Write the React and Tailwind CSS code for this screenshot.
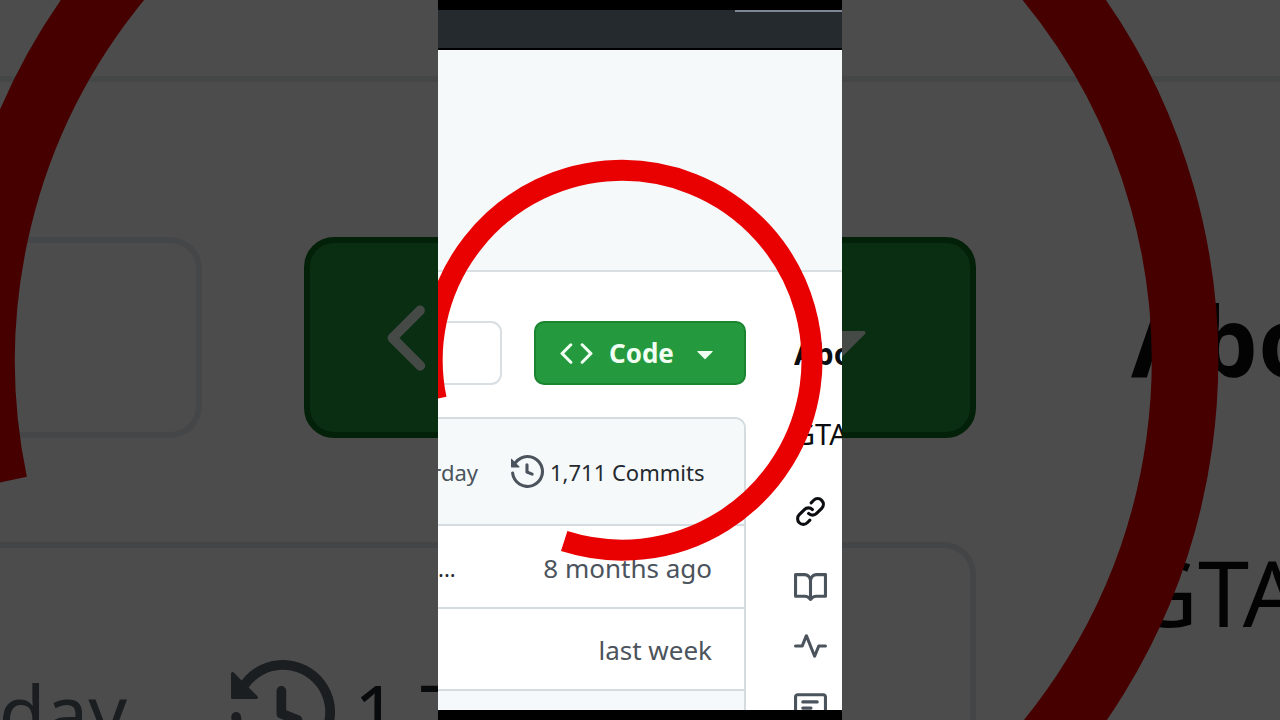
import React from "react";

const PATHS = {
  code: "m11.28 3.22 4.25 4.25a.75.75 0 0 1 0 1.06l-4.25 4.25a.749.749 0 0 1-1.275-.326.749.749 0 0 1 .215-.734L13.94 8l-3.72-3.72a.749.749 0 0 1 .326-1.275.749.749 0 0 1 .734.215Zm-6.56 0a.751.751 0 0 1 1.042.018.751.751 0 0 1 .018 1.042L2.06 8l3.72 3.72a.749.749 0 0 1-.326 1.275.749.749 0 0 1-.734-.215L.47 8.53a.75.75 0 0 1 0-1.06Z",
  caret: "m4.427 7.427 3.396 3.396a.25.25 0 0 0 .354 0l3.396-3.396A.25.25 0 0 0 11.396 7H4.604a.25.25 0 0 0-.177.427Z",
  history: "m.427 1.927 1.215 1.215a8.002 8.002 0 1 1-1.6 5.685.75.75 0 1 1 1.493-.154 6.5 6.5 0 1 0 1.18-4.458l1.358 1.358A.25.25 0 0 1 3.896 6H.25A.25.25 0 0 1 0 5.75V2.104a.25.25 0 0 1 .427-.177ZM7.75 4a.75.75 0 0 1 .75.75v2.992l2.028.812a.75.75 0 0 1-.557 1.392l-2.5-1A.751.751 0 0 1 7 8.25v-3.5A.75.75 0 0 1 7.75 4Z",
  link: "m7.775 3.275 1.25-1.25a3.5 3.5 0 1 1 4.95 4.95l-2.5 2.5a3.5 3.5 0 0 1-4.95 0 .751.751 0 0 1 .018-1.042.751.751 0 0 1 1.042-.018 1.998 1.998 0 0 0 2.83 0l2.5-2.5a2.002 2.002 0 0 0-2.83-2.83l-1.25 1.25a.751.751 0 0 1-1.042-.018.751.751 0 0 1-.018-1.042Zm-4.69 9.64a1.998 1.998 0 0 0 2.83 0l1.25-1.25a.751.751 0 0 1 1.042.018.751.751 0 0 1 .018 1.042l-1.25 1.25a3.5 3.5 0 1 1-4.95-4.95l2.5-2.5a3.5 3.5 0 0 1 4.95 0 .751.751 0 0 1-.018 1.042.751.751 0 0 1-1.042.018 1.998 1.998 0 0 0-2.83 0l-2.5 2.5a1.998 1.998 0 0 0 0 2.83Z",
  book: "M0 1.75A.75.75 0 0 1 .75 1h4.253c1.227 0 2.317.59 3 1.501A3.743 3.743 0 0 1 11.006 1h4.245a.75.75 0 0 1 .75.75v10.5a.75.75 0 0 1-.75.75h-4.507a2.25 2.25 0 0 0-1.591.659l-.622.621a.75.75 0 0 1-1.06 0l-.622-.621A2.25 2.25 0 0 0 5.258 13H.75a.75.75 0 0 1-.75-.75Zm7.251 10.324.004-5.073-.002-2.253A2.25 2.25 0 0 0 5.003 2.5H1.5v9h3.757a3.75 3.75 0 0 1 1.994.574ZM8.755 4.75l-.004 7.322a3.752 3.752 0 0 1 1.992-.572H14.5v-9h-3.495a2.25 2.25 0 0 0-2.25 2.25Z",
  pulse: "M6 2c.306 0 .582.187.696.471L10 10.731l1.304-3.26A.751.751 0 0 1 12 7h3.25a.75.75 0 0 1 0 1.5h-2.742l-1.812 4.528a.751.751 0 0 1-1.392 0L6 4.77 4.696 8.03A.75.75 0 0 1 4 8.5H.75a.75.75 0 0 1 0-1.5h2.742l1.812-4.529A.751.751 0 0 1 6 2Z",
  note: "M0 3.75C0 2.784.784 2 1.75 2h12.5c.966 0 1.75.784 1.75 1.75v8.5A1.75 1.75 0 0 1 14.25 14H1.75A1.75 1.75 0 0 1 0 12.25Zm1.75-.25a.25.25 0 0 0-.25.25v8.5c0 .138.112.25.25.25h12.5a.25.25 0 0 0 .25-.25v-8.5a.25.25 0 0 0-.25-.25ZM3.5 6.25a.75.75 0 0 1 .75-.75h7a.75.75 0 0 1 0 1.5h-7a.75.75 0 0 1-.75-.75Zm.75 2.25h4a.75.75 0 0 1 0 1.5h-4a.75.75 0 0 1 0-1.5Z",
};

function Icon({ name, className }) {
  return (
    <svg viewBox="0 0 16 16" fill="currentColor" aria-hidden="true" className={`shrink-0 ${className}`}>
      <path d={PATHS[name]} />
    </svg>
  );
}

// Open red ring drawn over the Code button.
function Ring() {
  return (
    <svg
      viewBox="438 0 404 720"
      preserveAspectRatio="xMidYMid slice"
      aria-hidden="true"
      className="pointer-events-none absolute inset-0 h-full w-full"
    >
      <path
        d="M564.2 541.1A189.9 189.9 0 1 0 436.2 399"
        fill="none"
        stroke="#e90000"
        strokeWidth="21"
      />
    </svg>
  );
}

// Enlarged, dimmed view of the same page behind the main panel.
function Backdrop() {
  return (
    <div aria-hidden="true" className="absolute inset-0 overflow-hidden opacity-30">
      <div className="flex h-full flex-col bg-[#fcfcfc]">
        <div className="h-[82px] shrink-0 border-b-[6px] border-[#e3e8e9] bg-[#fafbfb]" />
        <div className="flex min-h-0 flex-1 justify-between">
          <div className="flex w-[976px] shrink-0 flex-col pt-[155px]">
            <div className="flex h-[201px] shrink-0 justify-between">
              <div className="w-[202px] rounded-r-[32px] border-y-[6px] border-r-[6px] border-[#e3e7eb]" />
              <div className="flex w-[672px] items-center justify-between rounded-[30px] border-[6px] border-[#0d6b1b] bg-[#23973d] pr-[74px] pl-[76px] text-[#e4f5e7]">
                <Icon name="code" className="size-[104px]" />
                <Icon name="caret" className="size-[112px]" />
              </div>
            </div>
            <div className="mt-[104px] flex min-h-[340px] items-start rounded-tr-[32px] border-t-[6px] border-r-[6px] border-[#e0e5e9] bg-[#fafbfb] pt-[112px] text-[76px] leading-[104px] text-[#1f2328]">
              <span className="flex w-[127px] justify-end text-[#59636e]">yesterday</span>
              <Icon name="history" className="ml-[104px] size-[104px] text-[#59636e]" />
              <span className="ml-[19px]">1,711</span>
            </div>
          </div>
          <div className="w-[149px] shrink-0 pt-[204px] text-[#0b0d10]">
            <p className="text-[96px] leading-[108px] font-bold">About</p>
            <p className="mt-[144px] text-[92px] leading-[108px]">GTA</p>
          </div>
        </div>
      </div>
      <Ring />
    </div>
  );
}

function FileRow({ message, age, last }) {
  return (
    <tr className={last ? "h-[40px] bg-[#f5f9fb]" : "h-[82px] border-b-2 border-[#d5dce0]"}>
      <td className="w-1/4 pt-[2px] text-left text-[22px]">{message}</td>
      <td className="pt-[2px] pr-8 text-right whitespace-nowrap text-[#4b535c]">{age}</td>
    </tr>
  );
}

function RepoPanel() {
  return (
    <main className="relative flex h-screen w-full max-w-[404px] flex-col overflow-hidden border-y-[10px] border-black bg-white text-[#24292f]">
      <header className="flex h-[40px] shrink-0 justify-end border-b-2 border-black bg-[#252a2e]">
        <div className="h-[2px] w-[107px] bg-[#7d8794]" />
      </header>
      <div className="h-[222px] shrink-0 border-b-2 border-[#d8dfe3] bg-[#f5f9fa]" />
      <div className="flex min-h-0 flex-1">
        <div className="flex w-[308px] shrink-0 flex-col pt-[49px]">
          <div className="flex h-[64px] shrink-0 justify-between">
            <input
              type="text"
              aria-label="Go to file"
              className="w-[64px] rounded-r-[11px] border-y-2 border-r-2 border-[#d8dee2] bg-white outline-none"
            />
            <button
              type="button"
              className="flex w-[212px] items-center rounded-[10px] border-2 border-[#1b8431] bg-[#25993d] pl-6 text-[26px] leading-[36px] font-bold text-[#f0fff2]"
            >
              <Icon name="code" className="size-[33px]" />
              <span className="ml-4">Code</span>
              <Icon name="caret" className="ml-[14px] size-[34px]" />
            </button>
          </div>
          <div className="mt-[32px] rounded-tr-[11px] border-t-2 border-r-2 border-[#d5dce0]">
            <div className="flex h-[107px] items-center overflow-hidden rounded-tr-[9px] border-b-2 border-[#d5dce0] bg-[#f5f9fa] text-[22px] leading-[36px]">
              <span className="flex w-[40px] justify-end text-[#4b535c]">yesterday</span>
              <a href="#commits" className="ml-[33px] flex items-center gap-[6px]">
                <Icon name="history" className="size-[33px] text-[#4b535c]" />
                <span className="whitespace-nowrap">1,711 Commits</span>
              </a>
            </div>
            <table aria-label="Files" className="w-full table-fixed border-collapse text-[26px] leading-[36px]">
              <tbody>
                <FileRow message="..." age="8 months ago" />
                <FileRow message="" age="last week" />
                <FileRow message="" age="" last />
              </tbody>
            </table>
          </div>
        </div>
        <aside className="ml-[48px] w-[48px] shrink-0 overflow-hidden pt-[64px] text-[#4b535c]">
          <h2 className="text-[30px] leading-[36px] font-bold text-[#0b0d10]">About</h2>
          <p className="mt-[44px] text-[29px] leading-[36px] text-[#0b0d10]">GTA</p>
          <a href="#website" aria-label="Website" className="mt-[43px] block text-[#0b0d10]">
            <Icon name="link" className="size-[33px]" />
          </a>
          <a href="#readme" aria-label="Readme" className="mt-[43px] block">
            <Icon name="book" className="size-[33px]" />
          </a>
          <a href="#activity" aria-label="Activity" className="mt-[26px] block">
            <Icon name="pulse" className="size-[33px]" />
          </a>
          <a href="#properties" aria-label="Custom properties" className="mt-[26px] block">
            <Icon name="note" className="size-[33px]" />
          </a>
        </aside>
      </div>
      <div className="pointer-events-none absolute inset-x-0 -inset-y-[10px]">
        <Ring />
      </div>
    </main>
  );
}

export default function App() {
  return (
    <div className="relative flex h-screen justify-center overflow-hidden bg-black font-['Noto_Sans',sans-serif]">
      <Backdrop />
      <RepoPanel />
    </div>
  );
}
